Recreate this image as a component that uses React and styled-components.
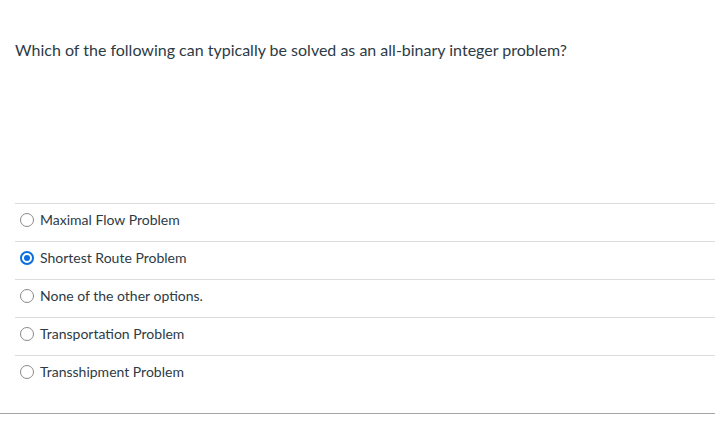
import React from 'react';
import styled, { createGlobalStyle } from 'styled-components';

const options = [
  { id: 'a', label: 'Maximal Flow Problem' },
  { id: 'b', label: 'Shortest Route Problem', checked: true },
  { id: 'c', label: 'None of the other options.' },
  { id: 'd', label: 'Transportation Problem' },
  { id: 'e', label: 'Transshipment Problem' },
];

const App = () => {
  return (
    <>
      <GlobalStyle />
      <Question>
        <QuestionText>
          Which of the following can typically be solved as an all-binary integer problem?
        </QuestionText>
        <Answers>
          {options.map((o) => (
            <AnswerRow key={o.id}>
              <Radio $checked={o.checked} />
              <AnswerLabel>{o.label}</AnswerLabel>
            </AnswerRow>
          ))}
        </Answers>
      </Question>
    </>
  );
};

const GlobalStyle = createGlobalStyle`
  body {
    margin: 0;
    background: #fff;
    font-family: Lato, "Open Sans", sans-serif;
    color: #2d3b45;
  }
`;

const Question = styled.div`
  width: 715px;
  border-bottom: 1px solid #a5a5a5;
  padding-bottom: 20px;
`;

const QuestionText = styled.p`
  margin: 0;
  padding: 40px 15px 0;
  height: 203px;
  box-sizing: border-box;
  font-size: 16px;
  line-height: 20px;
`;

const Answers = styled.div`
  margin-left: 15px;
`;

const AnswerRow = styled.div`
  display: flex;
  align-items: center;
  gap: 6px;
  height: 38px;
  padding: 0 0 6px 5px;
  border-top: 1px solid #dcdcdc;
  box-sizing: border-box;
`;

const Radio = styled.span`
  width: 14px;
  height: 14px;
  flex-shrink: 0;
  box-sizing: border-box;
  border-radius: 50%;
  border: ${(p) => (p.$checked ? '2px solid #0b6fe0' : '1.5px solid #8a8a8a')};
  display: flex;
  align-items: center;
  justify-content: center;

  &::after {
    content: '';
    display: ${(p) => (p.$checked ? 'block' : 'none')};
    width: 6px;
    height: 6px;
    border-radius: 50%;
    background: #0b6fe0;
  }
`;

const AnswerLabel = styled.span`
  font-size: 14px;
  line-height: 18px;
`;

export default App;
